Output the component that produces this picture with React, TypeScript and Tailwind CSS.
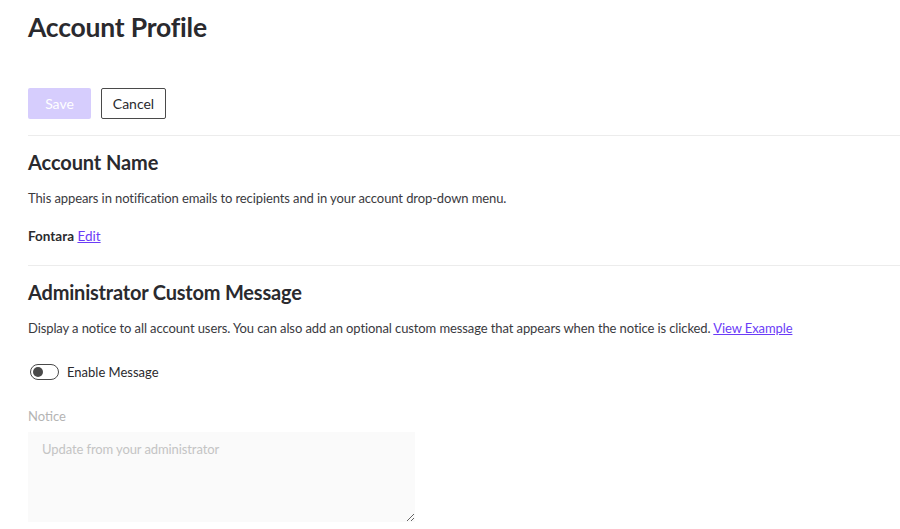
export default function App() {
  return (
    <div className="min-h-screen bg-white text-[#2a2a2e] font-['Lato',sans-serif] pl-7">
      <h1 className="text-[26.5px] font-bold leading-none pt-[14px] tracking-[-0.2px]">Account Profile</h1>

      <div className="flex gap-[10px] mt-[47px]">
        <button className="w-[63px] h-[31px] rounded-[2px] bg-[#d6cdfd] text-white text-[14px]">Save</button>
        <button className="w-[65px] h-[31px] rounded-[2px] border border-[#4a4a4a] text-[14px] text-[#2a2a2e]">Cancel</button>
      </div>

      <div className="mt-4 border-t border-[#ececec]" />

      <section className="pt-[14px]">
        <h2 className="text-[20px] font-bold leading-[24px] tracking-[-0.1px]">Account Name</h2>
        <p className="text-[13px] leading-5 tracking-[-0.1px] text-[#3a3a3e] mt-[14px]">
          This appears in notification emails to recipients and in your account drop-down menu.
        </p>
        <p className="text-[13.5px] leading-5 mt-[18px]">
          <span className="font-bold">Fontara</span>{' '}
          <a href="#" className="text-[#6b3cf7] underline">Edit</a>
        </p>
      </section>

      <div className="mt-[19px] border-t border-[#ececec]" />

      <section className="pt-[14px]">
        <h2 className="text-[20px] font-bold leading-[24px] tracking-[-0.2px]">Administrator Custom Message</h2>
        <p className="text-[13px] leading-5 tracking-[-0.1px] text-[#3a3a3e] mt-[14px]">
          Display a notice to all account users. You can also add an optional custom message that appears when the notice is clicked.{' '}
          <a href="#" className="text-[#6b3cf7] underline">View Example</a>
        </p>

        <div className="flex items-center gap-2 mt-[25px] pl-[2px]">
          <div className="w-[29px] h-[16px] rounded-full border-[1.5px] border-[#4a4a4a] flex items-center px-[2px]">
            <div className="w-[10px] h-[10px] rounded-full bg-[#4a4a4a]" />
          </div>
          <span className="text-[13px]">Enable Message</span>
        </div>

        <label className="block text-[13px] text-[#b4b4b4] mt-[25px]">Notice</label>
        <textarea
          disabled
          placeholder="Update from your administrator"
          className="block mt-[5px] w-[387px] h-[90px] bg-[#fafafa] px-[14px] py-[8px] text-[13px] tracking-[-0.1px] placeholder:text-[#c4c4c4] resize-y"
        />
      </section>
    </div>
  );
}
